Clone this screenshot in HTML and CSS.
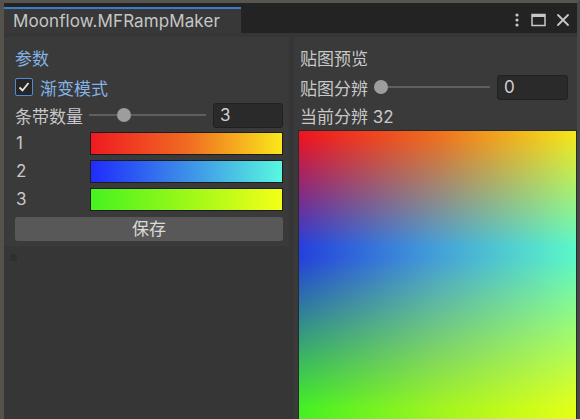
FILE: index.html
```html
<!DOCTYPE html>
<html>
<head>
<meta charset="utf-8">
<link rel="stylesheet" href="styles.css">
</head>
<body>
<div class="window">
  <div class="tabbar">
    <div class="tab">Moonflow.MFRampMaker</div>
    <div class="tab-spacer"></div>
    <div class="tab-icons">
      <svg class="ic" width="8" height="16" viewBox="0 0 8 16"><circle cx="4" cy="3" r="1.6" fill="#c8c8c8"/><circle cx="4" cy="8" r="1.6" fill="#c8c8c8"/><circle cx="4" cy="13" r="1.6" fill="#c8c8c8"/></svg>
      <svg class="ic" width="15" height="14" viewBox="0 0 15 14"><rect x="1" y="1.5" width="13" height="11" fill="none" stroke="#c8c8c8" stroke-width="1.5"/><rect x="1" y="1" width="13" height="3" fill="#c8c8c8"/></svg>
      <svg class="ic" width="14" height="14" viewBox="0 0 14 14"><path d="M2 2 L12 12 M12 2 L2 12" stroke="#c8c8c8" stroke-width="1.8" stroke-linecap="round"/></svg>
    </div>
  </div>
  <div class="content">
    <div class="left">
      <div class="group">
        <div class="row title blue">参数</div>
        <div class="row check-row">
          <span class="checkbox"><svg width="14" height="14" viewBox="0 0 14 14"><path d="M2.5 7.5 L5.5 10.5 L11.5 3" fill="none" stroke="#e8e8e8" stroke-width="1.8"/></svg></span>
          <span class="blue">渐变模式</span>
        </div>
        <div class="row slider-row">
          <span class="label">条带数量</span>
          <div class="slider"><div class="track"></div><div class="thumb thumb-left"></div></div>
          <div class="field">3</div>
        </div>
        <div class="row ramp-row"><span class="num">1</span><div class="ramp r1"></div></div>
        <div class="row ramp-row"><span class="num">2</span><div class="ramp r2"></div></div>
        <div class="row ramp-row"><span class="num">3</span><div class="ramp r3"></div></div>
        <div class="button">保存</div>
      </div>
      <div class="mini"></div>
    </div>
    <div class="right">
      <div class="row title">贴图预览</div>
      <div class="row slider-row2">
        <span class="label">贴图分辨</span>
        <div class="slider slider2"><div class="track"></div><div class="thumb thumb-start"></div></div>
        <div class="field">0</div>
      </div>
      <div class="row info">当前分辨 32</div>
      <div class="preview">
        <div class="layer l1"></div>
        <div class="layer l2"></div>
        <div class="layer l3"></div>
      </div>
    </div>
  </div>
</div>
</body>
</html>
```
FILE: styles.css
```css
html, body {
  margin: 0;
  padding: 0;
  background: #383838;
}
body {
  font-family: Inter, "Noto Sans CJK SC", sans-serif;
  font-size: 17px;
  color: #c8c8c8;
}
.window {
  width: 580px;
  height: 419px;
  box-sizing: border-box;
  border-top: 3px solid #58544f;
  border-left: 4px solid #55514b;
  border-right: 3px solid #474747;
  background: #363636;
  display: flex;
  flex-direction: column;
  overflow: hidden;
}
.tabbar {
  height: 30px;
  flex: none;
  background: #232323;
  display: flex;
  align-items: flex-end;
}
.tab {
  width: 237px;
  height: 26px;
  box-sizing: border-box;
  background: #383838;
  border-top: 2px solid #3b7bc7;
  color: #c6c6c6;
  font-size: 17px;
  padding-left: 9px;
  line-height: 24px;
  letter-spacing: 0.1px;
}
.tab-spacer { flex: 1; }
.tab-icons {
  align-self: center;
  display: flex;
  align-items: center;
  gap: 10px;
  padding-right: 7px;
  margin-top: 3px;
}
.ic { display: block; }
.content {
  flex: 1;
  display: flex;
  gap: 5px;
}
.left {
  width: 285px;
  flex: none;
}
.group {
  margin-top: 4px;
  background: #3a3a3a;
  padding: 6px 6px 5px 11px;
}
.row {
  display: flex;
  align-items: center;
  height: 28px;
  white-space: nowrap;
}
.title { margin-bottom: 2px; }
.blue { color: #85b2e4; }
.checkbox {
  width: 18px;
  height: 18px;
  box-sizing: border-box;
  border: 1px solid #4f8bd2;
  border-radius: 2px;
  background: #262626;
  display: flex;
  align-items: center;
  justify-content: center;
  margin-right: 7px;
}
.checkbox svg { display: block; }
.label { width: 74px; flex: none; }
.slider {
  position: relative;
  width: 117px;
  height: 16px;
  flex: none;
}
.track {
  position: absolute;
  left: 0;
  right: 0;
  top: 7px;
  height: 2px;
  background: #5f5f5f;
}
.thumb {
  position: absolute;
  top: 1px;
  width: 14px;
  height: 14px;
  border-radius: 50%;
  background: #9d9d9d;
}
.thumb-left { left: 28px; }
.thumb-start { left: 0; }
.field {
  margin-left: 7px;
  width: 71px;
  height: 25px;
  box-sizing: border-box;
  background: #2a2a2a;
  border: 1px solid #212121;
  border-radius: 3px;
  padding-left: 6px;
  line-height: 23px;
  color: #d0d0d0;
}
.ramp-row:first-of-type { margin-top: 1px; }
.num {
  width: 74px;
  flex: none;
  padding-left: 1px;
}
.ramp {
  width: 194px;
  height: 23px;
  box-sizing: border-box;
  border: 1px solid #1c1c1c;
}
.r1 { background: linear-gradient(to right, #ef1a22, #f06a22, #f9e81b); }
.r2 { background: linear-gradient(to right, #1f2cfb, #3c8fe8, #58f8e0); }
.r3 { background: linear-gradient(to right, #46f220, #9bf818, #f4ff18); }
.button {
  margin-top: 4px;
  height: 24px;
  background: #585858;
  border-radius: 3px;
  text-align: center;
  line-height: 24px;
  color: #dadada;
}
.mini {
  width: 7px;
  height: 7px;
  margin: 8px 0 0 6px;
  background: #303030;
}
.right {
  flex: 1;
  margin-top: 4px;
  background: #3a3a3a;
  padding: 6px 0 0 4px;
  display: flex;
  flex-direction: column;
}
.right .row { padding-left: 2px; }
.right .title { margin-bottom: 2px; }
.slider-row2 .label { width: 74px; }
.slider2 { width: 116px; }
.info { margin-bottom: 1px; }
.preview {
  position: relative;
  flex: 1;
  border: 1px solid #2a2a2a;
  border-bottom: none;
  overflow: hidden;
}
.layer {
  position: absolute;
  inset: 0;
}
.l1 { background: linear-gradient(to right, #ec1422, #ee7020, #f2e81e); }
.l2 {
  background: linear-gradient(to right, #2440dc, #44a0d8, #5cf8c8);
  -webkit-mask-image: linear-gradient(to bottom, transparent 2%, #000 40%);
  mask-image: linear-gradient(to bottom, transparent 2%, #000 40%);
}
.l3 {
  background: linear-gradient(to right, #44f024, #a0f420, #e4ff18);
  -webkit-mask-image: linear-gradient(to bottom, transparent 44%, #000 96%);
  mask-image: linear-gradient(to bottom, transparent 44%, #000 96%);
}
```
